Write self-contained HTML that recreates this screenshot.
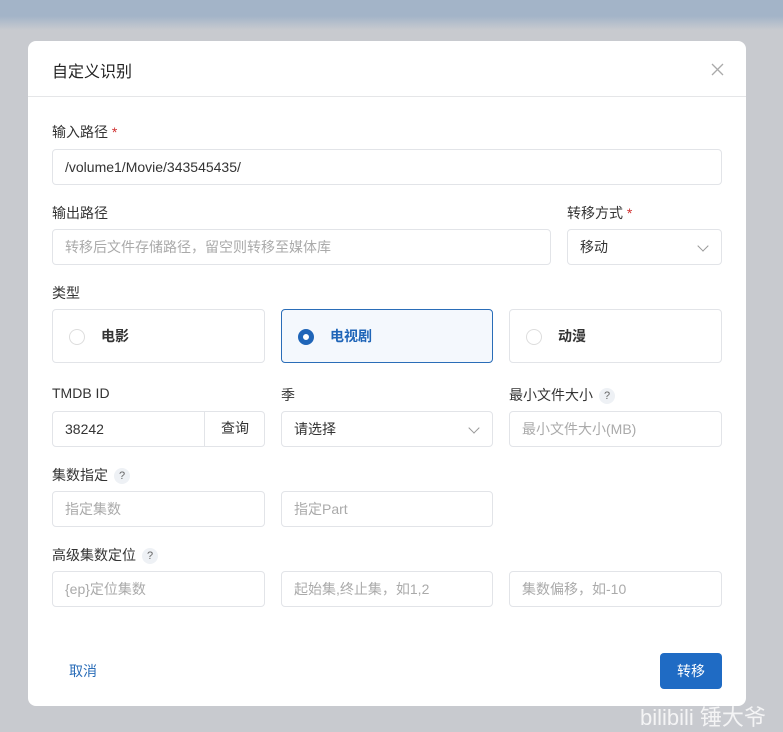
<!DOCTYPE html><html><head><meta charset="utf-8"><style>
*{box-sizing:border-box;margin:0;padding:0}
body{width:783px;height:727px;overflow:hidden;background:#c8cacf;font-family:"Liberation Sans","Noto Sans CJK SC",sans-serif;position:relative;color:#333}
.top{position:absolute;left:0;top:0;width:783px;height:30px;background:linear-gradient(#a3b4c8 0,#a3b4c8 16px,#c8cacf 30px)}
.dlg{position:absolute;left:28px;top:41px;width:718px;height:665px;background:#fff;border-radius:8px}
.a{position:absolute}
.lbl{position:absolute;font-size:14px;color:#333}
.star{color:#d03030}
.in{position:absolute;height:36px;border:1px solid #e2e4e8;border-radius:4px;font-size:14px;padding:0 12px;line-height:34px;color:#333}
.card{position:absolute;top:268px;height:54px;width:213px;border:1px solid #e2e4e8;border-radius:4px;font-size:14px;font-weight:bold;line-height:52px;padding-left:48px}
.card .r{position:absolute;left:16px;top:19px;width:16px;height:16px;border:1px solid #ddd;border-radius:50%}
.q{display:inline-block;width:16px;height:16px;border-radius:50%;background:#eef1f5;color:#666;font-size:11px;text-align:center;line-height:16px;margin-left:6px;vertical-align:1px}
.chev{position:absolute;right:14px;top:12px;width:8px;height:8px;border-right:1.3px solid #999;border-bottom:1.3px solid #999;transform:rotate(45deg)}
</style></head><body>
<div class="top"></div>
<div class="dlg">
<div class="a" style="left:24px;top:17px;font-size:16px;color:#222">自定义识别</div>
<svg class="a" style="left:683px;top:22px" width="13" height="13" viewBox="0 0 13 13"><path d="M1 1L12 12M12 1L1 12" stroke="#aaa" stroke-width="1.3"/></svg>
<div class="a" style="left:0;top:55px;width:718px;height:1px;background:#e5e6e8"></div>
<div class="lbl" style="left:24px;top:81px">输入路径 <span class="star">*</span></div>
<div class="in" style="left:24px;top:108px;width:670px">/volume1/Movie/343545435/</div>
<div class="lbl" style="left:24px;top:162px">输出路径</div>
<div class="in" style="left:24px;top:188px;width:499px;color:#aaa">转移后文件存储路径，留空则转移至媒体库</div>
<div class="lbl" style="left:539px;top:162px">转移方式 <span class="star">*</span></div>
<div class="in" style="left:539px;top:188px;width:155px">移动<span class="chev"></span></div>
<div class="lbl" style="left:24px;top:242px">类型</div>
<div class="card" style="left:24px"><span class="r"></span>电影</div>
<div class="card" style="left:253px;width:212px;border-color:#2a6db8;background:#f4f8fd;color:#1f65b8"><span class="r" style="border:5px solid #1f65b8;background:#fff"></span>电视剧</div>
<div class="card" style="left:481px"><span class="r"></span>动漫</div>
<div class="lbl" style="left:24px;top:344px">TMDB ID</div>
<div class="in" style="left:24px;top:370px;width:213px">38242<div class="a" style="left:151px;top:-1px;width:61px;height:36px;border-left:1px solid #e2e4e8;text-align:center">查询</div></div>
<div class="lbl" style="left:253px;top:344px">季</div>
<div class="in" style="left:253px;top:370px;width:212px">请选择<span class="chev"></span></div>
<div class="lbl" style="left:481px;top:344px">最小文件大小<span class="q">?</span></div>
<div class="in" style="left:481px;top:370px;width:213px;color:#aaa">最小文件大小(MB)</div>
<div class="lbl" style="left:24px;top:424px">集数指定<span class="q">?</span></div>
<div class="in" style="left:24px;top:450px;width:213px;color:#aaa">指定集数</div>
<div class="in" style="left:253px;top:450px;width:212px;color:#aaa">指定Part</div>
<div class="lbl" style="left:24px;top:504px">高级集数定位<span class="q">?</span></div>
<div class="in" style="left:24px;top:530px;width:213px;color:#aaa">{ep}定位集数</div>
<div class="in" style="left:253px;top:530px;width:212px;color:#aaa">起始集,终止集，如1,2</div>
<div class="in" style="left:481px;top:530px;width:213px;color:#aaa">集数偏移，如-10</div>
<div class="a" style="left:41px;top:620px;font-size:14px;color:#2a6db8">取消</div>
<div class="a" style="left:632px;top:612px;width:62px;height:36px;background:#1f6bc4;border-radius:4px;color:#fff;font-size:14px;text-align:center;line-height:36px">转移</div>
</div>
<div class="a" style="left:640px;top:700px;font-size:22px;color:#fff;opacity:.8">bilibili 锤大爷</div>
</body></html>
